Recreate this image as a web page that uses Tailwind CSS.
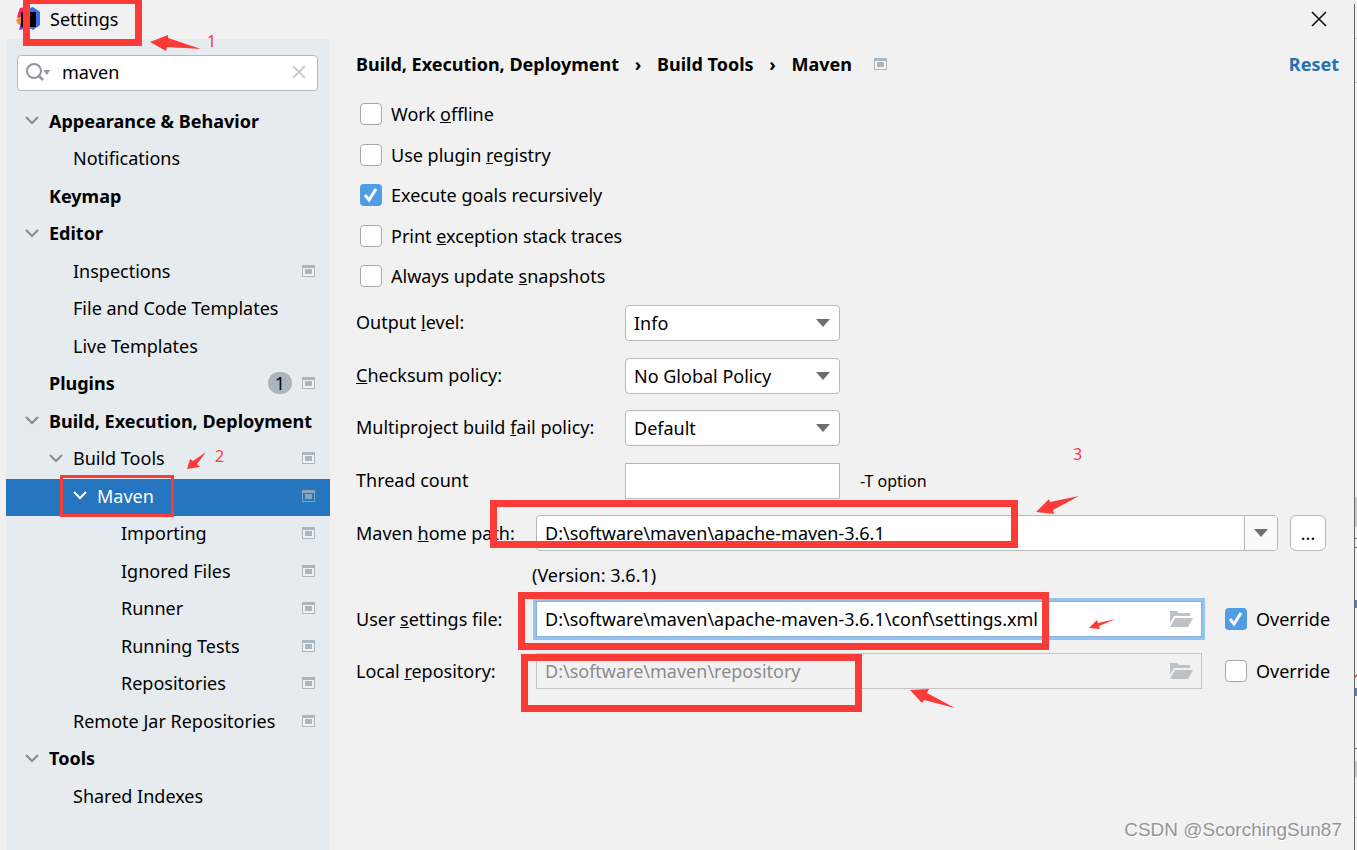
<!DOCTYPE html>
<html lang="en">

<head>
    <meta charset="UTF-8">
    <meta name="viewport" content="width=device-width, initial-scale=1.0">
    <title>Settings</title>
    <script src="https://cdn.jsdelivr.net/npm/@tailwindcss/browser@4"></script>
</head>

<body class="relative flex min-h-screen flex-col overflow-x-hidden bg-[#f1f1f1] pl-1.5 font-['Noto_Sans','Open_Sans',sans-serif] text-[18px] leading-6 text-black">
    <!-- shared icons -->
    <svg class="hidden">
        <symbol id="project" viewBox="0 0 13 12">
            <path fill="#fff" fill-opacity=".4" d="M1 3h11v8H1z" />
            <path fill="currentColor" fill-rule="evenodd" d="M0 0h13v12H0zM1 3v8h11V3z" />
            <path fill="currentColor" d="M3 4h7v5H3z" />
        </symbol>
        <symbol id="project-dark" viewBox="0 0 13 12">
            <path fill="currentColor" fill-rule="evenodd" d="M0 0h13v12H0zM1 3v8h11V3z" />
            <path fill="currentColor" d="M3 4h7v5H3z" />
        </symbol>
        <symbol id="chevron" viewBox="0 0 14 9">
            <path fill="none" stroke="currentColor" stroke-width="2" d="M1 1l6 6 6-6" />
        </symbol>
        <symbol id="arrow" viewBox="0 0 14 8">
            <path fill="currentColor" d="M0 0h14L7 8z" />
        </symbol>
        <symbol id="folder" viewBox="0 0 24 18">
            <path fill="currentColor" d="M1 1h7l2 2h11v3H5L1 13z" />
            <path fill="currentColor" d="M6 8h18l-5 9H1z" />
        </symbol>
    </svg>

    <header class="flex h-[39px] items-center pr-[30px] pb-0.5 pl-2.5">
        <svg class="h-6 w-6" viewBox="0 0 24 24">
            <path fill="#f0246f" d="M4 1l7-1v9L1 11l1-5z" />
            <path fill="#fc8a1f" d="M0 13l6-4v10l-4-2z" />
            <path fill="#8a35d6" d="M3 23l2-8 9 6z" />
            <path fill="#3b6ae8" d="M10 2l7-2 7 5v13l-7 5-7-4z" />
            <path d="M5 5h15v15H5z" />
            <path stroke="#fff" stroke-width="1" d="M7 8h3M7 16h5" />
        </svg>
        <h1 class="ml-2.5">Settings</h1>
        <button class="ml-auto" type="button" aria-label="Close">
            <svg class="h-4 w-4" viewBox="0 0 16 16">
                <path fill="none" stroke="#111" stroke-width="1.6" d="M1 1l14 14M15 1L1 15" />
            </svg>
        </button>
    </header>

    <div class="flex flex-1">
        <aside class="w-[324px] shrink-0 bg-[#e6ebef]">
            <div class="mr-3 mb-[13px] ml-[11px] mt-4 flex h-9 items-center rounded border border-[#b8b8b8] bg-white pr-1.5 pb-0.5 pl-2">
                <svg class="h-5 w-6 shrink-0" viewBox="0 0 24 20">
                    <circle cx="8" cy="9" r="7" fill="none" stroke="#8f979e" stroke-width="2" />
                    <path stroke="#8f979e" stroke-width="2.5" d="M12 13l5 5" />
                    <path fill="#8f979e" d="M17 8h7l-3 5z" />
                </svg>
                <input class="ml-3 w-full min-w-0 flex-1 outline-none" type="text" value="maven" aria-label="Search settings">
                <button class="mr-1.5 text-[#c3c7cb]" type="button" aria-label="Clear search">
                    <svg class="h-3 w-3" viewBox="0 0 12 12">
                        <path fill="none" stroke="currentColor" stroke-width="1.8" d="M0 0l12 12M12 0L0 12" />
                    </svg>
                </button>
            </div>

            <ul class="text-[#aab5bd] *:flex *:items-center *:pr-[15px] *:pb-1 *:odd:h-[37px] *:even:h-[38px]">
                <li class="pl-[19px]">
                    <svg class="mr-2.5 h-[9px] w-3.5 text-[#868b8f]"><use href="#chevron" /></svg>
                    <a href="#" class="font-bold text-black">Appearance &amp; Behavior</a>
                </li>
                <li class="pl-[67px]"><a href="#" class="text-black">Notifications</a></li>
                <li class="pl-[43px]"><a href="#" class="font-bold text-black">Keymap</a></li>
                <li class="pl-[19px]">
                    <svg class="mr-2.5 h-[9px] w-3.5 text-[#868b8f]"><use href="#chevron" /></svg>
                    <a href="#" class="font-bold text-black">Editor</a>
                </li>
                <li class="pl-[67px]">
                    <a href="#" class="text-black">Inspections</a>
                    <svg class="ml-auto h-3 w-[13px]"><use href="#project" /></svg>
                </li>
                <li class="pl-[67px]"><a href="#" class="text-black">File and Code Templates</a></li>
                <li class="pl-[67px]"><a href="#" class="text-black">Live Templates</a></li>
                <li class="pl-[43px]">
                    <a href="#" class="font-bold text-black">Plugins</a>
                    <span class="mr-2.5 ml-auto flex h-[22px] w-6 items-center justify-center rounded-full bg-[#aab5bd] text-black">1</span>
                    <svg class="h-3 w-[13px]"><use href="#project" /></svg>
                </li>
                <li class="pl-[19px]">
                    <svg class="mr-2.5 h-[9px] w-3.5 text-[#868b8f]"><use href="#chevron" /></svg>
                    <a href="#" class="font-bold whitespace-nowrap text-black">Build, Execution, Deployment</a>
                </li>
                <li class="pl-[43px]">
                    <svg class="mr-2.5 h-[9px] w-3.5 text-[#868b8f]"><use href="#chevron" /></svg>
                    <a href="#" class="text-black">Build Tools</a>
                    <svg class="ml-auto h-3 w-[13px]"><use href="#project" /></svg>
                </li>
                <li class="bg-[#2675bf] pl-[67px]">
                    <svg class="mr-2.5 h-[9px] w-3.5 text-white"><use href="#chevron" /></svg>
                    <a href="#" class="text-white">Maven</a>
                    <svg class="ml-auto h-3 w-[13px] text-[#8ba3b8]"><use href="#project-dark" /></svg>
                </li>
                <li class="pl-[115px]">
                    <a href="#" class="text-black">Importing</a>
                    <svg class="ml-auto h-3 w-[13px]"><use href="#project" /></svg>
                </li>
                <li class="pl-[115px]">
                    <a href="#" class="text-black">Ignored Files</a>
                    <svg class="ml-auto h-3 w-[13px]"><use href="#project" /></svg>
                </li>
                <li class="pl-[115px]">
                    <a href="#" class="text-black">Runner</a>
                    <svg class="ml-auto h-3 w-[13px]"><use href="#project" /></svg>
                </li>
                <li class="pl-[115px]">
                    <a href="#" class="text-black">Running Tests</a>
                    <svg class="ml-auto h-3 w-[13px]"><use href="#project" /></svg>
                </li>
                <li class="pl-[115px]">
                    <a href="#" class="text-black">Repositories</a>
                    <svg class="ml-auto h-3 w-[13px]"><use href="#project" /></svg>
                </li>
                <li class="pl-[67px]">
                    <a href="#" class="text-black">Remote Jar Repositories</a>
                    <svg class="ml-auto h-3 w-[13px]"><use href="#project" /></svg>
                </li>
                <li class="pl-[19px]">
                    <svg class="mr-2.5 h-[9px] w-3.5 text-[#868b8f]"><use href="#chevron" /></svg>
                    <a href="#" class="font-bold text-black">Tools</a>
                </li>
                <li class="pl-[67px]"><a href="#" class="text-black">Shared Indexes</a></li>
            </ul>
        </aside>

        <main class="min-w-0 flex-1 pt-[13px] pl-[26px]">
            <nav class="mb-[18px] flex items-center pr-[15px] font-bold">
                <span>Build, Execution, Deployment</span>
                <span class="w-[38px] text-center">›</span>
                <span>Build Tools</span>
                <span class="w-[38px] text-center">›</span>
                <span>Maven</span>
                <svg class="ml-[22px] h-3 w-[13px] text-[#aab5bd]"><use href="#project" /></svg>
                <a href="#" class="ml-auto text-[#2470b3]">Reset</a>
            </nav>

            <form>
                <div class="mb-[9px] *:flex *:items-center *:gap-[9px] *:pl-1 *:odd:h-10 *:even:h-[41px]">
                    <label>
                        <input type="checkbox" class="h-[22px] w-[22px] appearance-none rounded border border-[#a8a8a8] bg-white">
                        <span>Work <u>o</u>ffline</span>
                    </label>
                    <label>
                        <input type="checkbox" class="h-[22px] w-[22px] appearance-none rounded border border-[#a8a8a8] bg-white">
                        <span>Use plugin <u>r</u>egistry</span>
                    </label>
                    <label>
                        <span class="relative flex">
                            <input type="checkbox" checked class="h-[22px] w-[22px] appearance-none rounded bg-[#4f9ee3]">
                            <svg class="pointer-events-none absolute inset-0" viewBox="0 0 22 22">
                                <path fill="none" stroke="#fff" stroke-width="3" d="M5 11l4 5 7-11" />
                            </svg>
                        </span>
                        <span>Execute <u>g</u>oals recursively</span>
                    </label>
                    <label>
                        <input type="checkbox" class="h-[22px] w-[22px] appearance-none rounded border border-[#a8a8a8] bg-white">
                        <span>Print <u>e</u>xception stack traces</span>
                    </label>
                    <label>
                        <input type="checkbox" class="h-[22px] w-[22px] appearance-none rounded border border-[#a8a8a8] bg-white">
                        <span>Always update <u>s</u>napshots</span>
                    </label>
                </div>

                <div class="*:flex *:items-start *:odd:h-[53px] *:even:h-[52px]">
                    <div>
                        <label for="output" class="w-[269px] py-[5px]">Output <u>l</u>evel:</label>
                        <div class="relative">
                            <select id="output" class="h-9 w-[215px] appearance-none rounded border border-[#b8b8b8] bg-white px-2">
                                <option>Info</option>
                            </select>
                            <svg class="pointer-events-none absolute top-3.5 right-2.5 h-2 w-3.5 text-[#6e6e6e]"><use href="#arrow" /></svg>
                        </div>
                    </div>
                    <div>
                        <label for="checksum" class="w-[269px] py-[5px]"><u>C</u>hecksum policy:</label>
                        <div class="relative">
                            <select id="checksum" class="h-9 w-[215px] appearance-none rounded border border-[#b8b8b8] bg-white px-2">
                                <option>No Global Policy</option>
                            </select>
                            <svg class="pointer-events-none absolute top-3.5 right-2.5 h-2 w-3.5 text-[#6e6e6e]"><use href="#arrow" /></svg>
                        </div>
                    </div>
                    <div>
                        <label for="fail" class="w-[269px] py-[5px] whitespace-nowrap">Multiproject build <u>f</u>ail policy:</label>
                        <div class="relative">
                            <select id="fail" class="h-9 w-[215px] appearance-none rounded border border-[#b8b8b8] bg-white px-2">
                                <option>Default</option>
                            </select>
                            <svg class="pointer-events-none absolute top-3.5 right-2.5 h-2 w-3.5 text-[#6e6e6e]"><use href="#arrow" /></svg>
                        </div>
                    </div>
                    <div>
                        <label for="threads" class="w-[269px] py-[5px]">Thread count</label>
                        <input id="threads" type="text" class="h-9 w-[215px] border border-[#b8b8b8] bg-white px-2">
                        <span class="ml-5 py-1.5 text-base leading-6">-T option</span>
                    </div>
                </div>

                <div class="flex items-center pr-7">
                    <label for="home" class="w-[180px] shrink-0">Maven <u>h</u>ome path:</label>
                    <div class="flex h-9 min-w-0 flex-1 overflow-hidden rounded border border-[#b8b8b8] bg-white">
                        <input id="home" type="text" value="D:\software\maven\apache-maven-3.6.1" class="min-w-0 flex-1 px-2 outline-none">
                        <button type="button" aria-label="Choose path" class="flex w-[33px] items-center justify-center border-l border-[#b8b8b8] bg-[#fafafa] text-[#6e6e6e]">
                            <svg class="h-2 w-3.5"><use href="#arrow" /></svg>
                        </button>
                    </div>
                    <button type="button" class="ml-3 h-9 w-9 rounded-md border border-[#b8b8b8] bg-white">...</button>
                </div>
                <p class="mt-3 mb-3.5 pl-44">(Version: 3.6.1)</p>
                <div class="mb-4 flex items-center pr-[23px]">
                    <label for="settings" class="w-[180px] shrink-0">User <u>s</u>ettings file:</label>
                    <div class="flex h-9 min-w-0 flex-1 items-center border border-[#87afda] bg-white pr-2 ring-3 ring-[#97c3f3]">
                        <input id="settings" type="text" value="D:\software\maven\apache-maven-3.6.1\conf\settings.xml" class="min-w-0 flex-1 px-2 outline-none">
                        <svg class="h-[18px] w-6 text-[#bdc2c6]"><use href="#folder" /></svg>
                    </div>
                    <label class="ml-[23px] flex w-[106px] shrink-0 items-center gap-[9px]">
                        <span class="relative flex">
                            <input type="checkbox" checked class="h-[22px] w-[22px] appearance-none rounded bg-[#4f9ee3]">
                            <svg class="pointer-events-none absolute inset-0" viewBox="0 0 22 22">
                                <path fill="none" stroke="#fff" stroke-width="3" d="M5 11l4 5 7-11" />
                            </svg>
                        </span>
                        <span>Override</span>
                    </label>
                </div>
                <div class="flex items-center pr-[23px]">
                    <label for="repo" class="w-[180px] shrink-0">Local <u>r</u>epository:</label>
                    <div class="flex h-9 min-w-0 flex-1 items-center border border-[#c4c4c4] pr-2">
                        <input id="repo" type="text" disabled value="D:\software\maven\repository" class="min-w-0 flex-1 px-2 text-[#8c8c8c]">
                        <svg class="h-[18px] w-6 text-[#bdc2c6]"><use href="#folder" /></svg>
                    </div>
                    <label class="ml-[23px] flex w-[106px] shrink-0 items-center gap-[9px]">
                        <input type="checkbox" class="h-[22px] w-[22px] appearance-none rounded border border-[#a8a8a8] bg-white">
                        <span>Override</span>
                    </label>
                </div>
            </form>
        </main>
        <!-- sliver of the editor window behind the dialog -->
        <svg class="-mt-[35px] w-[3px] border-l border-[#666]">
            <path fill="#c8c8c8" d="M0 34h3v1H0zM0 78h3v1H0zM0 493h3v30H0zM0 757h3v16H0zM0 813h3v1H0z" />
            <path fill="#777" d="M0 534h3v1H0zM0 543h3v1H0zM0 744h3v1H0z" />
            <path fill="#5b7fae" d="M0 596h2v8H0zM0 684h2v8H0z" />
            <path fill="#d33" d="M0 672l3-3v2l-3 3z" />
        </svg>
    </div>

    <p class="absolute right-[15px] bottom-2 font-['Liberation_Sans',sans-serif] text-[19px] text-[#959595] [text-shadow:1px_1px_0_#fff]">CSDN @ScorchingSun87</p>

    <!-- red marks drawn over the dialog -->
    <svg class="pointer-events-none absolute top-0 left-0" width="1357" height="850">
        <g fill="#fc3a38" fill-rule="evenodd">
            <path d="M23 0h119v46H23zM30 4v35h105V4z" />
            <path d="M60 475h114v42H60zM63 478v36h108v-36z" />
            <path d="M490 500h528v48H490zM497 507v34h514v-34z" />
            <path d="M518 592h531v58H518zM525 599v44h517v-44z" />
            <path d="M521 654h341v58H521zM528 661v44h327v-44z" />
            <path d="M150 42l18-7v3l33 11-34-2-1 4z" />
            <path d="M187 469l3-10 3 2 13-9-9 12 3 3z" />
            <path d="M1036 512l13-13 1 3 29-6-26 14 1 4z" />
            <path d="M1089 628l8-8 1 3 18-4-17 7 1 3z" />
            <path d="M910 690l19-1-2 4 28 15-31-8-2 3z" />
            <text x="207" y="47" font-size="16">1</text>
            <text x="215" y="462" font-size="16">2</text>
            <text x="1073" y="460" font-size="16">3</text>
        </g>
    </svg>
</body>

</html>
